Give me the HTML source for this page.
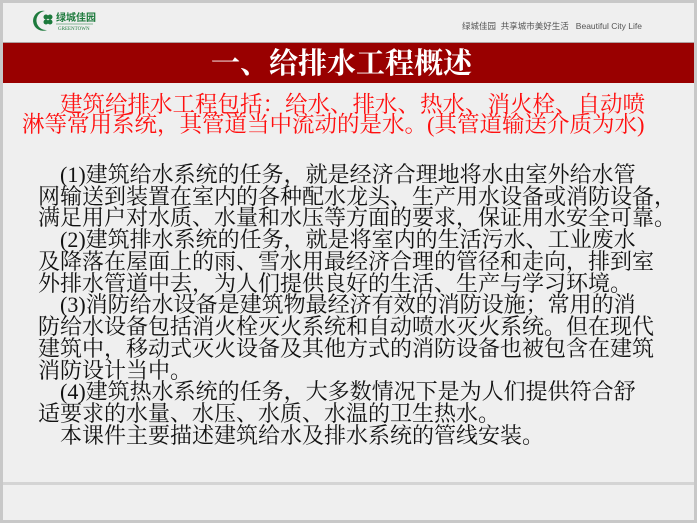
<!DOCTYPE html>
<html><head><meta charset="utf-8"><style>
html,body{margin:0;padding:0}
body{width:697px;height:523px;position:relative;background:#c8c8c8;overflow:hidden;font-family:"Liberation Serif","Noto Serif CJK SC",serif}
.page{position:absolute;left:3px;top:3px;width:691px;height:517px;background:#efefef}
.band{position:absolute;left:3px;top:42px;width:691px;height:40px;background:#990000;border-top:1px solid #b0a0a0}
.title{position:absolute;left:0;width:697px;top:42px;height:40px;line-height:40px;text-align:center;color:#fff;font-size:29px;font-weight:bold;font-family:"Noto Serif CJK SC",serif;text-indent:-14px}
.l{position:absolute;white-space:nowrap;font-size:22px;line-height:22px;color:#111;font-family:"Liberation Serif","Noto Serif CJK SC",serif}
.r{color:#ff1010;font-size:22.5px}
.tag{position:absolute;top:20px;left:462px;font-size:8.5px;color:#555;font-family:"Liberation Sans","Noto Sans CJK SC",sans-serif;white-space:nowrap}
.foot{position:absolute;left:3px;top:482px;width:691px;height:3px;background:#d4d4d4}
</style></head><body>
<div class="page"></div>
<svg style="position:absolute;left:33px;top:9px" width="65" height="24" viewBox="0 0 65 24">
<path d="M12 2 A10 10 0 1 0 14 21 A8 8 0 1 1 12 2Z" fill="#1d7a3c"/>
<circle cx="13" cy="8" r="2.5" fill="#1d7a3c"/><circle cx="17" cy="8" r="2.5" fill="#1d7a3c"/>
<circle cx="13" cy="13" r="2.5" fill="#1d7a3c"/><circle cx="17" cy="13" r="2.5" fill="#1d7a3c"/>
<text x="23" y="12" font-size="10" fill="#1d7a3c" font-family="Noto Sans CJK SC,sans-serif" font-weight="bold">绿城佳园</text>
<line x1="23" y1="15" x2="60" y2="15" stroke="#1d7a3c" stroke-width="0.6"/>
<text x="25" y="21" font-size="5" fill="#1d7a3c" font-family="Liberation Serif,serif">GREENTOWN</text>
</svg>
<div class="tag">绿城佳园 &nbsp;共享城市美好生活 &nbsp; Beautiful City Life</div>
<div class="band"></div>
<div class="title">一、给排水工程概述</div>
<div class="l r" style="left:60px;top:94px">建筑给排水工程包括：给水、排水、热水、消火栓、自动喷</div>
<div class="l r" style="left:22px;top:114px">淋等常用系统，其管道当中流动的是水。(其管道输送介质为水)</div>
<div class="l" style="left:60px;top:164px">(1)建筑给水系统的任务，就是经济合理地将水由室外给水管</div>
<div class="l" style="left:38px;top:186px">网输送到装置在室内的各种配水龙头、生产用水设备或消防设备，</div>
<div class="l" style="left:38px;top:207px">满足用户对水质、水量和水压等方面的要求，保证用水安全可靠。</div>
<div class="l" style="left:60px;top:229px">(2)建筑排水系统的任务，就是将室内的生活污水、工业废水</div>
<div class="l" style="left:38px;top:251px">及降落在屋面上的雨、雪水用最经济合理的管径和走向，排到室</div>
<div class="l" style="left:38px;top:273px">外排水管道中去，为人们提供良好的生活、生产与学习环境。</div>
<div class="l" style="left:60px;top:294px">(3)消防给水设备是建筑物最经济有效的消防设施；常用的消</div>
<div class="l" style="left:38px;top:316px">防给水设备包括消火栓灭火系统和自动喷水灭火系统。但在现代</div>
<div class="l" style="left:38px;top:338px">建筑中，移动式灭火设备及其他方式的消防设备也被包含在建筑</div>
<div class="l" style="left:38px;top:360px">消防设计当中。</div>
<div class="l" style="left:60px;top:381px">(4)建筑热水系统的任务，大多数情况下是为人们提供符合舒</div>
<div class="l" style="left:38px;top:403px">适要求的水量、水压、水质、水温的卫生热水。</div>
<div class="l" style="left:60px;top:425px">本课件主要描述建筑给水及排水系统的管线安装。</div>
<div class="foot"></div>
</body></html>
